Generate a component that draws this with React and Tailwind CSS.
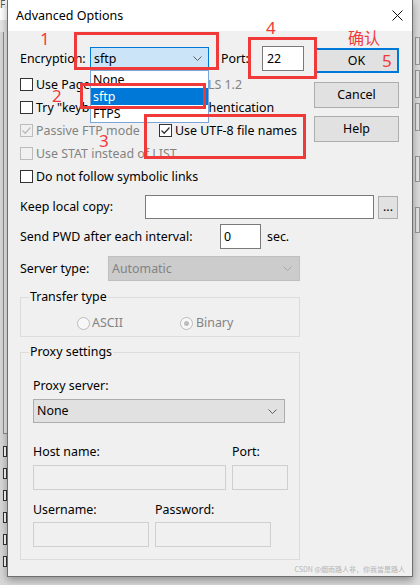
import React from "react";

const Chevron = ({ color = "#5f5f5f" }) => (
  <svg width="9" height="5" viewBox="0 0 9 5">
    <path d="M0.5 0.5L4.5 4.5L8.5 0.5" fill="none" stroke={color} strokeWidth="1" />
  </svg>
);

const Check = ({ checked, disabled }) => (
  <span
    className={
      disabled
        ? "w-[13px] h-[13px] border border-[#bcbcbc] bg-[#f0f0f0] flex items-center justify-center shrink-0"
        : "w-[13px] h-[13px] border border-[#333333] bg-white flex items-center justify-center shrink-0"
    }
  >
    {checked && (
      <svg width="11" height="11" viewBox="0 0 11 11">
        <path
          d="M1.5 5.5L4.2 8.2L9.5 2.5"
          fill="none"
          stroke={disabled ? "#bcbcbc" : "#333333"}
          strokeWidth="1.3"
        />
      </svg>
    )}
  </span>
);

const CheckRow = ({ label, checked, disabled }) => (
  <div className="flex items-center gap-[3px]">
    <Check checked={checked} disabled={disabled} />
    <span className={disabled ? "text-[#838383]" : ""}>{label}</span>
  </div>
);

const Radio = ({ checked }) => (
  <span className="w-[13px] h-[13px] rounded-full border border-[#bcbcbc] bg-[#f7f7f7] flex items-center justify-center shrink-0">
    {checked && <span className="w-[5px] h-[5px] rounded-full bg-[#bcbcbc]" />}
  </span>
);

const Box = ({ className }) => (
  <div className={"border border-[#cfcfcf] bg-[#f0f0f0] h-[25px] " + className} />
);

const LeftStrip = () => (
  <div className="w-[7px] h-full flex flex-col shrink-0">
    <div className="h-[8px] bg-[#f7f7f7] text-[10px] leading-[8px] text-[#555] overflow-hidden">F</div>
    <div className="h-[12px] bg-white" />
    <div className="h-[12px] bg-[#e6e6e6]" />
    <div className="ml-[3px] h-[402px] border-l border-b border-[#8a8a8a] bg-[#ececec]" />
    <div className="flex flex-col gap-[11px] mt-[12px] ml-[3px]">
      <span className="h-[11px] border border-[#333] bg-white" />
      <span className="h-[11px] border border-[#333] bg-white" />
      <span className="h-[11px] border border-[#333] bg-white" />
      <span className="h-[11px] border border-[#333] bg-white" />
      <span className="h-[11px] border border-[#333] bg-white" />
      <span className="h-[11px] border border-[#333] bg-white" />
    </div>
  </div>
);

const RightStrip = () => (
  <div className="w-[7px] h-full flex flex-col shrink-0 bg-[#dcdcdc] gap-[5px] pt-[37px] pl-[2px]">
    <span className="h-[28px] border border-[#9a9a9a] bg-[#e6e6e6]" />
    <span className="h-[28px] border border-[#9a9a9a] bg-[#e6e6e6]" />
    <span className="h-[28px] border border-[#9a9a9a] bg-[#e6e6e6]" />
    <span className="mt-[20px] h-[26px] border border-[#9a9a9a] bg-[#e6e6e6]" />
    <span className="mt-[20px] h-[26px] border border-[#9a9a9a] bg-[#e6e6e6]" />
  </div>
);

const App = () => {
  return (
    <div className="relative w-[420px] h-[585px] overflow-hidden bg-[#d8d8d8] flex font-['Noto_Sans','Noto_Sans_CJK_SC',sans-serif] text-[12.4px] leading-[16px] text-black">
      <LeftStrip />
      <div className="relative w-[406px] h-[577px] shrink-0 border-x border-b border-[#6f6f6f] bg-[#f0f0f0] flex flex-col shadow-[0_3px_8px_rgba(0,0,0,0.35)]">
        <div className="h-[31px] bg-white flex items-center justify-between pl-[8px] pr-[9px]">
          <span className="text-[12.5px]">Advanced Options</span>
          <svg width="11" height="11" viewBox="0 0 11 11">
            <path d="M0.5 0.5L10.5 10.5M10.5 0.5L0.5 10.5" stroke="#111" strokeWidth="1" />
          </svg>
        </div>

        <div className="flex flex-col pl-[12px] pt-[15px]">
          <div className="flex">
            <div className="w-[290px] flex flex-col">
              <div className="h-[25px] flex items-center">
                <span className="w-[70px]">Encryption:</span>
                <div className="w-[119px] h-[23px] border border-[#0078d7] bg-[#cce4f7] flex items-center justify-between pl-[3px] pr-[6px]">
                  <span>sftp</span>
                  <Chevron />
                </div>
                <span className="ml-[12px] w-[41px]">Port:</span>
                <div className="w-[42px] h-[25px] border border-[#7a7a7a] bg-white flex items-center pl-[4px]">
                  22
                </div>
              </div>

              <div className="mt-[2px] h-[23px] w-[222px] flex items-center justify-between">
                <CheckRow label="Use Pageant" />
                <span className="text-[#838383]">TLS 1.2</span>
              </div>
              <div className="h-[23px] flex items-center">
                <CheckRow label={'Try "keyboard-interactive" authentication'} />
              </div>
              <div className="h-[23px] flex items-center">
                <div className="w-[139px]">
                  <CheckRow label="Passive FTP mode" checked disabled />
                </div>
                <CheckRow label="Use UTF-8 file names" checked />
              </div>
              <div className="h-[23px] flex items-center">
                <CheckRow label="Use STAT instead of LIST" disabled />
              </div>
              <div className="h-[23px] flex items-center">
                <CheckRow label="Do not follow symbolic links" />
              </div>
            </div>

            <div className="ml-[4px] w-[85px] flex flex-col">
              <div className="mt-[2px] h-[25px] border-2 border-[#0078d7] bg-[#e1e1e1] flex items-center justify-center">
                OK
              </div>
              <div className="mt-[9px] h-[26px] border border-[#adadad] bg-[#e1e1e1] flex items-center justify-center">
                Cancel
              </div>
              <div className="mt-[8px] h-[26px] border border-[#adadad] bg-[#e1e1e1] flex items-center justify-center">
                Help
              </div>
            </div>
          </div>

          <div className="mt-[7px] h-[24px] flex items-center">
            <span className="w-[125px]">Keep local copy:</span>
            <div className="w-[229px] h-[24px] border border-[#7a7a7a] bg-white" />
            <div className="ml-[4px] w-[20px] h-[23px] border border-[#adadad] bg-[#e1e1e1] flex items-center justify-center leading-[10px]">
              ...
            </div>
          </div>

          <div className="mt-[5px] h-[25px] flex items-center">
            <span className="w-[200px]">Send PWD after each interval:</span>
            <div className="w-[41px] h-[25px] border border-[#7a7a7a] bg-white flex items-center pl-[3px]">
              0
            </div>
            <span className="ml-[6px]">sec.</span>
          </div>

          <div className="mt-[7px] h-[25px] flex items-center">
            <span className="w-[88px]">Server type:</span>
            <div className="w-[192px] h-[25px] border border-[#bfbfbf] bg-[#cccccc] text-[#838383] flex items-center justify-between pl-[3px] pr-[7px]">
              <span>Automatic</span>
              <Chevron color="#a8a8a8" />
            </div>
          </div>

          <fieldset className="mt-[8px] w-[280px] border border-[#dcdcdc] pl-[8px] pb-[5px]">
            <legend className="px-[1px]">Transfer type</legend>
            <div className="mt-[10px] h-[16px] flex items-center pl-[48px] text-[#838383]">
              <div className="w-[103px] flex items-center gap-[2px]">
                <Radio />
                <span>ASCII</span>
              </div>
              <div className="flex items-center gap-[3px]">
                <Radio checked />
                <span>Binary</span>
              </div>
            </div>
          </fieldset>

          <fieldset className="mt-[7px] w-[280px] border border-[#dcdcdc] pl-[8px] pb-[12px]">
            <legend className="px-[1px]">Proxy settings</legend>
            <div className="pl-[4px] flex flex-col">
              <span className="mt-[18px]">Proxy server:</span>
              <div className="mt-[5px] w-[252px] h-[24px] border border-[#adadad] bg-[#e1e1e1] flex items-center justify-between pl-[3px] pr-[7px]">
                <span>None</span>
                <Chevron />
              </div>
              <div className="mt-[21px] flex">
                <span className="w-[199px]">Host name:</span>
                <span>Port:</span>
              </div>
              <div className="mt-[5px] flex">
                <Box className="w-[193px]" />
                <Box className="ml-[6px] w-[56px]" />
              </div>
              <div className="mt-[12px] flex">
                <span className="w-[122px]">Username:</span>
                <span>Password:</span>
              </div>
              <div className="mt-[4px] flex">
                <Box className="w-[116px]" />
                <Box className="ml-[6px] w-[116px]" />
              </div>
            </div>
          </fieldset>
        </div>

        <span className="absolute right-[7px] bottom-[2px] text-[7px] leading-[9px] text-[#b4b4b4] font-['Noto_Sans_CJK_SC',sans-serif]">
          CSDN @烟雨路人非，你我皆是路人
        </span>
      </div>
      <RightStrip />

      {/* dropdown list */}
      <div className="absolute left-[90px] top-[70px] w-[119px] h-[53px] border border-[#7aa6d9] bg-white flex flex-col">
        <span className="h-[17px] pl-[2px] flex items-center">None</span>
        <span className="h-[17px] pl-[2px] flex items-center bg-[#0078d7] text-white">sftp</span>
        <span className="h-[17px] pl-[2px] flex items-center">FTPS</span>
      </div>

      {/* annotations */}
      <div className="absolute left-[74px] top-[32px] w-[145px] h-[38px] border-[3px] border-[#f03a3a]" />
      <div className="absolute left-[80px] top-[83px] w-[126px] h-[26px] border-[3px] border-[#f03a3a]" />
      <div className="absolute left-[144px] top-[114px] w-[162px] h-[45px] border-[3px] border-[#f03a3a]" />
      <div className="absolute left-[248px] top-[37px] w-[69px] h-[42px] border-[3px] border-[#f03a3a]" />
      <span className="absolute left-[40px] top-[30px] text-[17px] leading-[17px] text-[#f03a3a]">1</span>
      <span className="absolute left-[52px] top-[87px] text-[17px] leading-[17px] text-[#f03a3a]">2</span>
      <span className="absolute left-[99px] top-[132px] text-[17px] leading-[17px] text-[#f03a3a]">3</span>
      <span className="absolute left-[266px] top-[19px] text-[17px] leading-[17px] text-[#f03a3a]">4</span>
      <span className="absolute left-[382px] top-[52px] text-[17px] leading-[17px] text-[#f03a3a]">5</span>
      <span className="absolute left-[348px] top-[29px] text-[16px] leading-[17px] text-[#f03a3a] font-['Noto_Sans_CJK_SC',sans-serif]">
        确认
      </span>
    </div>
  );
};

export default App;
